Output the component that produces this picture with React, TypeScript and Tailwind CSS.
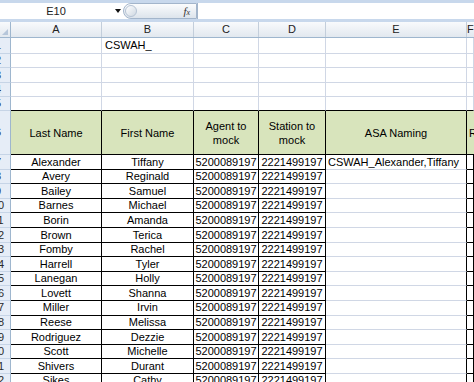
const people = [
  ["Alexander", "Tiffany"],
  ["Avery", "Reginald"],
  ["Bailey", "Samuel"],
  ["Barnes", "Michael"],
  ["Borin", "Amanda"],
  ["Brown", "Terica"],
  ["Fomby", "Rachel"],
  ["Harrell", "Tyler"],
  ["Lanegan", "Holly"],
  ["Lovett", "Shanna"],
  ["Miller", "Irvin"],
  ["Reese", "Melissa"],
  ["Rodriguez", "Dezzie"],
  ["Scott", "Michelle"],
  ["Shivers", "Durant"],
  ["Sikes", "Cathy"],
];

const cols = ["A", "B", "C", "D", "E", "F"];
const widths = ["w-[91px]", "w-[92px]", "w-[65px]", "w-[67px]", "w-[141px]", "flex-1"];
const upperHeights = ["h-[16px]", "h-[14px]", "h-[15px]", "h-[14px]", "h-[14px]"];

// row numbers are centred in a wider column that the screenshot crops off
const RowHead = ({ n }: { n?: number }) => (
  <div className="w-[11px] shrink-0 h-full overflow-hidden bg-[#e6edf7] border-r border-b border-r-[#9eb6ce] border-b-[#c6d4e6] flex items-center">
    <div className="w-[26px] -ml-[15px] shrink-0 text-center text-[11px] text-[#2a2a2a]">{n}</div>
  </div>
);

const FormulaBar = () => (
  <div className="h-[22px] bg-[#c8d8ec] pt-[3px]">
    <div className="h-[16px] bg-white flex items-center">
      <div className="w-[112px] text-center text-[11px] text-[#222]">E10</div>
      <div className="w-[11px] flex justify-center">
        <div className="w-0 h-0 border-l-[3px] border-r-[3px] border-t-[4px] border-l-transparent border-r-transparent border-t-[#111]" />
      </div>
      <div className="w-[74px] h-[16px] rounded-l-full border border-[#a3b5cb] bg-gradient-to-b from-[#fbfcfd] to-[#dde4ec] flex items-center">
        <div className="w-[12px] h-[12px] ml-[1px] rounded-full border border-[#b5c3d4] bg-gradient-to-br from-white to-[#cfd8e2]" />
        <div className="flex-1" />
        <span className="mr-[6px] text-[11px] italic text-[#333]" style={{ fontFamily: "'Liberation Serif', serif" }}>
          f<span className="text-[8px]">x</span>
        </span>
      </div>
      <div className="flex-1 h-full border-l border-[#a3b5cb]" />
    </div>
  </div>
);

export default function App() {
  return (
    <div className="w-[474px] h-[382px] overflow-hidden bg-white text-[11px] text-black" style={{ fontFamily: "'Liberation Sans', Arial, sans-serif" }}>
      <FormulaBar />

      {/* column letters */}
      <div className="flex h-[16px] bg-gradient-to-b from-[#f8fafc] to-[#e2e8ef] border-b border-[#9eb6ce]">
        <div className="w-[11px] shrink-0 border-r border-[#9eb6ce] flex items-end justify-end p-[2px]">
          <div className="w-0 h-0 border-b-[6px] border-l-[6px] border-l-transparent border-b-[#b6c6da]" />
        </div>
        {cols.map((c, i) => (
          <div key={c} className={`${widths[i]} shrink-0 border-r border-[#c3cedb] flex items-center justify-center text-[#222]`}>
            {c}
          </div>
        ))}
      </div>

      {/* empty rows above the table */}
      {upperHeights.map((h, r) => (
        <div key={r} className={`flex ${h}`}>
          <RowHead n={r + 1} />
          {cols.map((c, i) => (
            <div
              key={c}
              className={`${widths[i]} shrink-0 h-full border-r border-b border-r-[#d0d7e5] ${r === 4 ? "border-b-black" : "border-b-[#d0d7e5]"} px-[3px] flex items-center`}
            >
              {r === 0 && c === "B" ? "CSWAH_" : ""}
            </div>
          ))}
        </div>
      ))}

      {/* table header */}
      <div className="flex h-[44px]">
        <RowHead n={6} />
        {["Last Name", "First Name", "Agent to mock", "Station to mock", "ASA Naming", "R"].map((t, i) => (
          <div
            key={t}
            className={`${widths[i]} shrink-0 h-full bg-[#d8e4bc] border-r border-b border-black flex items-center ${i === 5 ? "justify-start pl-[2px]" : "justify-center px-[4px]"} text-center leading-[14px]`}
          >
            {t}
          </div>
        ))}
      </div>

      {/* data rows */}
      {people.map(([last, first], r) => (
        <div key={last} className="flex h-[14.6px]">
          <RowHead n={r + 7} />
          <div className="w-[91px] shrink-0 border-r border-b border-black flex items-center justify-center">{last}</div>
          <div className="w-[92px] shrink-0 border-r border-b border-black flex items-center justify-center">{first}</div>
          <div className="w-[65px] shrink-0 border-r border-b border-black flex items-center justify-center">5200089197</div>
          <div className="w-[67px] shrink-0 border-r border-b border-black flex items-center justify-center">2221499197</div>
          <div className="w-[141px] shrink-0 border-r border-b border-r-black border-b-[#d0d7e5] flex items-center px-[2px] whitespace-nowrap">
            {r === 0 ? "CSWAH_Alexander,Tiffany" : ""}
          </div>
          <div className="flex-1 border-r border-b border-black" />
        </div>
      ))}
    </div>
  );
}
